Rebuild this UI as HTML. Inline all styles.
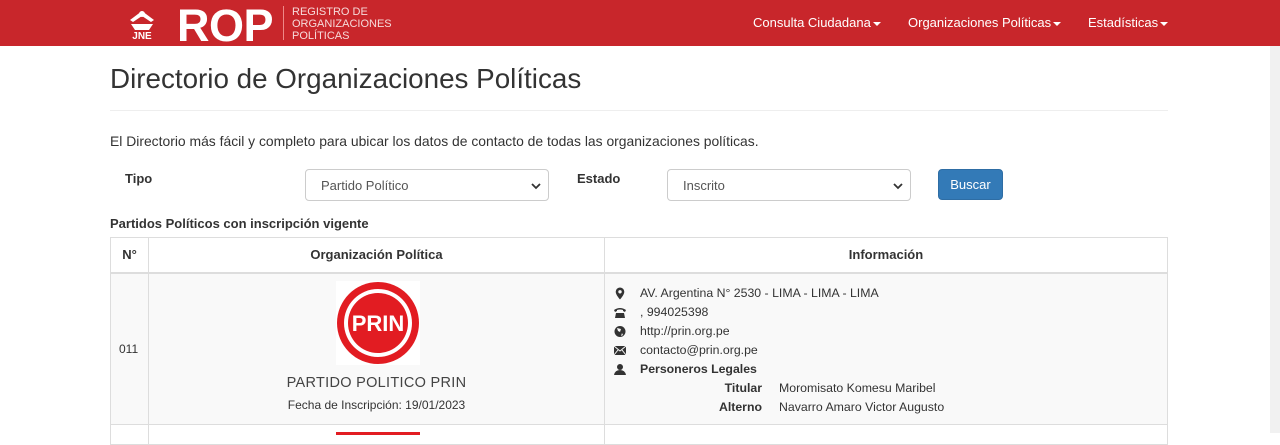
<!DOCTYPE html>
<html><head><meta charset="utf-8"><style>
*{box-sizing:border-box}
body{margin:0;width:1280px;height:433px;overflow:hidden;background:#fff;font-family:"Liberation Sans",Arial,sans-serif;color:#333;font-size:14px;position:relative}
.nav{position:absolute;left:0;top:0;width:1280px;height:46px;background:#c8262b;color:#fff}
.a{position:absolute}
.menu{position:absolute;top:15px;font-size:13px;color:#fff}
.caret{display:inline-block;width:0;height:0;border-left:4px solid transparent;border-right:4px solid transparent;border-top:4px solid #fff;vertical-align:middle;margin-left:2px}
h1{position:absolute;left:110px;top:63px;margin:0;font-weight:400;font-size:27.8px;color:#333}
.hr{position:absolute;left:110px;top:110px;width:1058px;border-top:1px solid #eee}
.sel{position:absolute;height:32px;border:1px solid #ccc;border-radius:4px;font-size:13px;color:#555;padding:8px 15px;background:#fff}
.sel svg{position:absolute;right:7px;top:12px}
table{position:absolute;left:110px;top:237px;width:1058px;border-collapse:collapse;font-size:13px}
td,th{border:1px solid #ddd;vertical-align:middle}
th{height:35px;border-bottom:2px solid #ddd}
.ic{position:absolute;left:8px;top:3px;width:14px;height:13px}
</style></head><body>
<div class="nav">
<svg class="a" style="left:125px;top:8px" width="34" height="32" viewBox="0 0 34 32"><path d="M5 12 L17 3 L29 12 L26 14 L17 8 L8 14Z M6 16 L28 16 L24 22 L10 22Z" fill="#fff"/><circle cx="17" cy="6" r="3" fill="#fff"/><text x="17" y="31" font-size="10" font-weight="700" fill="#fff" text-anchor="middle" font-family="Liberation Sans">JNE</text></svg>
<div class="a" style="left:177px;top:0px;font-size:45px;font-weight:700;letter-spacing:-0.5px">ROP</div>
<div class="a" style="left:283px;top:6px;width:1px;height:34px;background:#e88"></div>
<div class="a" style="left:292px;top:6px;font-size:11px;line-height:12px;color:#f6dada">REGISTRO DE<br>ORGANIZACIONES<br>POLÍTICAS</div>
<div class="menu" style="left:753px">Consulta Ciudadana<span class="caret"></span></div>
<div class="menu" style="left:908px">Organizaciones Políticas<span class="caret"></span></div>
<div class="menu" style="left:1088px">Estadísticas<span class="caret"></span></div>
</div>
<div class="a" style="left:1270px;top:46px;width:10px;height:387px;background:#f1f1f1"></div>
<h1>Directorio de Organizaciones Políticas</h1>
<div class="hr"></div>
<div class="a" style="left:110px;top:133px;font-size:13.9px">El Directorio más fácil y completo para ubicar los datos de contacto de todas las organizaciones políticas.</div>
<div class="a" style="left:125px;top:171px;font-weight:700;font-size:13px">Tipo</div>
<div class="sel" style="left:305px;top:169px;width:244px">Partido Político<svg width="10" height="8" viewBox="0 0 10 8"><path d="M1 2 L5 6 L9 2" stroke="#333" stroke-width="1.8" fill="none"/></svg></div>
<div class="a" style="left:577px;top:171px;font-weight:700;font-size:13px">Estado</div>
<div class="sel" style="left:667px;top:169px;width:244px">Inscrito<svg width="10" height="8" viewBox="0 0 10 8"><path d="M1 2 L5 6 L9 2" stroke="#333" stroke-width="1.8" fill="none"/></svg></div>
<div class="a" style="left:938px;top:169px;width:65px;height:31px;background:#337ab7;border:1px solid #2e6da4;border-radius:4px;color:#fff;font-size:13px;text-align:center;line-height:29px">Buscar</div>
<div class="a" style="left:110px;top:216px;font-weight:700;font-size:13px">Partidos Políticos con inscripción vigente</div>
<table>
<tr><th style="width:38px">N°</th><th style="width:456px">Organización Política</th><th>Información</th></tr>
<tr style="background:#f9f9f9;height:152px">
<td style="padding-left:8px;font-size:12px">011</td>
<td style="text-align:center;position:relative">
<div style="position:absolute;left:187px;top:7px;width:84px;height:84px;background:#fff">
<svg width="84" height="84" viewBox="0 0 84 84"><circle cx="42" cy="42" r="41" fill="#e21c22"/><circle cx="42" cy="42" r="34" fill="#fff"/><circle cx="42" cy="42" r="30" fill="#e21c22"/><text x="42" y="50" font-size="22" font-weight="700" fill="#fff" text-anchor="middle" font-family="Liberation Sans">PRIN</text></svg></div>
<div style="position:absolute;left:0;right:0;top:101px;font-size:14.5px;color:#444;letter-spacing:0.3px">PARTIDO POLITICO PRIN</div>
<div style="position:absolute;left:0;right:0;top:124px;font-size:12px">Fecha de Inscripción: 19/01/2023</div>
</td>
<td style="position:relative;font-size:12.3px">
<div style="position:absolute;left:0;top:10px;line-height:19px;width:400px">
<div style="position:relative;padding-left:35px"><svg class="ic" viewBox="0 0 14 13"><path d="M7 0.5a4.3 4.3 0 0 0-4.3 4.3C2.7 8 7 12.5 7 12.5s4.3-4.5 4.3-7.7A4.3 4.3 0 0 0 7 0.5z" fill="#333"/><circle cx="7" cy="4.8" r="1.7" fill="#f9f9f9"/></svg>AV. Argentina N° 2530 - LIMA - LIMA - LIMA</div>
<div style="position:relative;padding-left:35px"><svg class="ic" viewBox="0 0 14 13"><path d="M1 4 Q7 0 13 4 L12 6 L10 5 L10 4 Q7 3 4 4 L4 5 L2 6Z M3 7 L11 7 L12 12 L2 12Z" fill="#333"/></svg>, 994025398</div>
<div style="position:relative;padding-left:35px"><svg class="ic" viewBox="0 0 14 13"><circle cx="7" cy="6.5" r="5.5" fill="#333"/><path d="M4 3 L8 4 L7 7 L5 6Z M9 8 L10 10 L8 11Z" fill="#f9f9f9"/></svg>http://prin.org.pe</div>
<div style="position:relative;padding-left:35px"><svg class="ic" viewBox="0 0 14 13"><rect x="1" y="2" width="12" height="9" fill="#333"/><path d="M1 2 L7 7 L13 2 M1 11 L5 6 M13 11 L9 6" stroke="#f9f9f9" stroke-width="1" fill="none"/></svg>contacto@prin.org.pe</div>
<div style="position:relative;padding-left:35px;font-weight:700"><svg class="ic" viewBox="0 0 14 13"><circle cx="7" cy="4" r="3" fill="#333"/><path d="M1 12 Q2 7 7 7 Q12 7 13 12Z" fill="#333"/></svg>Personeros Legales</div>
<div style="position:relative"><b style="position:absolute;right:243px">Titular</b><span style="margin-left:174px">Moromisato Komesu Maribel</span></div>
<div style="position:relative"><b style="position:absolute;right:243px">Alterno</b><span style="margin-left:174px">Navarro Amaro Victor Augusto</span></div>
</div></td></tr>
<tr style="height:20px"><td></td><td style="position:relative"><div style="position:absolute;left:187px;top:7px;width:84px;height:3px;background:#e21c22"></div></td><td></td></tr>
</table>
</body></html>
